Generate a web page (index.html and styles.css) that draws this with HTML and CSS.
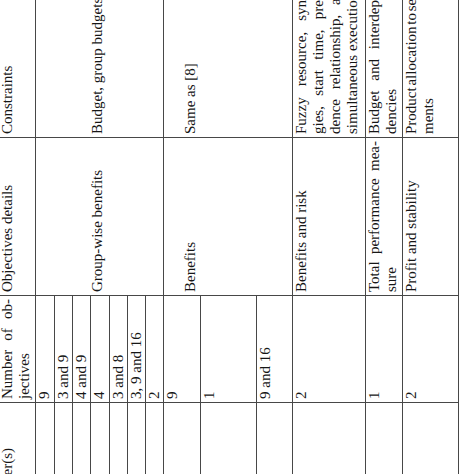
FILE: index.html
```html
<!DOCTYPE html>
<html lang="en">
<head>
<meta charset="utf-8">
<title>Table</title>
<link rel="stylesheet" href="styles.css">
</head>
<body>
<div class="page">
  <div class="sheet">
    <div class="grid">
      <div class="cell paper">Paper(s)</div>
      <div class="cell"><span class="jl">Number of ob-</span><span class="ln">jectives</span></div>
      <div class="cell">Objectives details</div>
      <div class="cell">Constraints</div>

      <div class="cell"></div>
      <div class="cell">9</div>
      <div class="cell span7">Group-wise benefits</div>
      <div class="cell span7"><span class="ln">Budget, group budgets</span></div>
      <div class="cell"></div>
      <div class="cell">3 and 9</div>
      <div class="cell"></div>
      <div class="cell">4 and 9</div>
      <div class="cell"></div>
      <div class="cell">4</div>
      <div class="cell"></div>
      <div class="cell">3 and 8</div>
      <div class="cell"></div>
      <div class="cell">3, 9 and 16</div>
      <div class="cell"></div>
      <div class="cell">2</div>

      <div class="cell"></div>
      <div class="cell">9</div>
      <div class="cell span3">Benefits</div>
      <div class="cell span3">Same as [8]</div>
      <div class="cell"></div>
      <div class="cell">1</div>
      <div class="cell"></div>
      <div class="cell">9 and 16</div>

      <div class="cell"></div>
      <div class="cell">2</div>
      <div class="cell">Benefits and risk</div>
      <div class="cell">
        <span class="jl">Fuzzy resource, syn-</span>
        <span class="jl">gies, start time, pre-</span>
        <span class="ln loose">dence relationship, and</span>
        <span class="ln">simultaneous execution</span>
      </div>

      <div class="cell"></div>
      <div class="cell">1</div>
      <div class="cell"><span class="jl">Total performance mea-</span><span class="ln">sure</span></div>
      <div class="cell"><span class="jl">Budget and interdep-</span><span class="ln">dencies</span></div>

      <div class="cell"></div>
      <div class="cell">2</div>
      <div class="cell">Profit and stability</div>
      <div class="cell"><span class="ln tight">Product allocation to seg-</span><span class="ln">ments</span></div>
    </div>
  </div>
</div>
</body>
</html>
```

FILE: styles.css
```css
html, body {
  margin: 0;
  padding: 0;
  background: #ffffff;
}

.page {
  width: 474px;
  height: 474px;
  overflow: hidden;
  background: #ffffff;
}

.sheet {
  width: 513px;
  transform-origin: 0 0;
  transform: translate(-2px, 504px) rotate(-90deg);
}

.grid {
  display: grid;
  grid-template-columns: 101px 107px 158px 146px;
  grid-template-rows: 37px 19px 18px 18px 19px 18px 18px 18px 37px 56px 36px 73px 37px 56px;
  border-top: 1px solid #474747;
  border-left: 1px solid #474747;
  font-family: "Liberation Serif", "Times New Roman", serif;
  font-size: 15px;
  line-height: 17px;
  color: #161616;
}

.cell {
  box-sizing: border-box;
  min-width: 0;
  padding: 0 3px;
  border-right: 1px solid #474747;
  border-bottom: 1px solid #474747;
  white-space: nowrap;
}

.paper {
  padding-left: 5px;
}

.jl {
  display: block;
  text-align: justify;
  text-align-last: justify;
  white-space: nowrap;
}

.ln {
  display: block;
  white-space: nowrap;
}

.loose {
  word-spacing: 6px;
}

.tight {
  word-spacing: -2px;
}

.span7 {
  grid-row: span 7;
  padding-top: 53px;
}

.span3 {
  grid-row: span 3;
  padding-top: 18px;
}
```
